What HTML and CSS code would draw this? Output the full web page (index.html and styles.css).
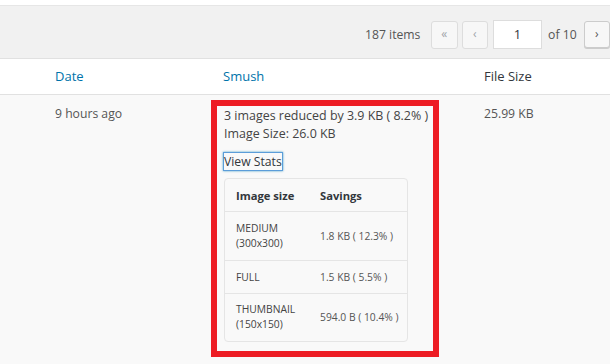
FILE: index.html
```html
<!DOCTYPE html>
<html>
<head>
<meta charset="utf-8">
<link rel="stylesheet" href="styles.css">
</head>
<body>
<div class="topstrip"></div>
<div class="toolbar">
  <span class="displaying-num">187 items</span>
  <span class="pbtn disabled first">&laquo;</span>
  <span class="pbtn disabled prev">&lsaquo;</span>
  <span class="pinput">1</span>
  <span class="total">of 10</span>
  <span class="pbtn next">&rsaquo;</span>
</div>
<div class="thead">
  <div class="th"></div>
  <div class="th sortable">Date</div>
  <div class="th sortable">Smush</div>
  <div class="th">File Size</div>
</div>
<div class="trow">
  <div class="td"></div>
  <div class="td">9 hours ago</div>
  <div class="td smush">
    <div class="line">3 images reduced by 3.9 KB ( 8.2% )</div>
    <div class="line">Image Size: 26.0 KB</div>
    <a class="view-stats" href="#">View Stats</a>
    <div class="stats">
      <div class="srow shead">
        <div class="sc">Image size</div>
        <div class="sc">Savings</div>
      </div>
      <div class="srow two">
        <div class="sc label">MEDIUM<br>(300x300)</div>
        <div class="sc">1.8 KB ( 12.3% )</div>
      </div>
      <div class="srow">
        <div class="sc label">FULL</div>
        <div class="sc">1.5 KB ( 5.5% )</div>
      </div>
      <div class="srow two last">
        <div class="sc label">THUMBNAIL<br>(150x150)</div>
        <div class="sc">594.0 B ( 10.4% )</div>
      </div>
    </div>
  </div>
  <div class="td">25.99 KB</div>
</div>
<div class="highlight"></div>
</body>
</html>
```
FILE: styles.css
```css
* { box-sizing: border-box; }
html, body { margin: 0; padding: 0; }
body {
  width: 610px;
  height: 364px;
  overflow: hidden;
  position: relative;
  background: #f9f9f9;
  font-family: "Open Sans", "Noto Sans", sans-serif;
  color: #555;
}
.topstrip {
  height: 6px;
  background: #fff;
  border-bottom: 1px solid #e6e6e6;
}
.toolbar {
  height: 53px;
  background: #f1f1f1;
  border-bottom: 1px solid #e1e1e1;
  display: flex;
  align-items: flex-start;
  padding: 14px 0 0 365px;
  white-space: nowrap;
  font-size: 12.2px;
}
.displaying-num {
  width: 54px;
  line-height: 29px;
  margin-right: 12px;
  color: #555;
}
.pbtn {
  width: 27px;
  height: 28px;
  margin-top: 1px;
  border: 1px solid #ddd;
  border-radius: 3px;
  background: #f7f7f7;
  color: #a0a5aa;
  display: flex;
  align-items: center;
  justify-content: center;
  font-size: 12px;
  line-height: 1;
  padding-bottom: 2px;
}
.pbtn.first { margin-right: 4px; }
.pbtn.prev { margin-right: 5px; }
.pbtn.next {
  border-color: #ccc;
  box-shadow: 0 1px 0 #ccc;
  color: #555;
  height: 27px;
}
.pinput {
  width: 50px;
  height: 29px;
  background: #fff;
  border: 1px solid #ddd;
  text-align: center;
  line-height: 27px;
  font-size: 13px;
  color: #32373c;
  margin-right: 6px;
}
.total {
  width: 30px;
  line-height: 29px;
  margin-right: 6px;
  color: #555;
}
.thead {
  height: 36px;
  background: #fff;
  border-bottom: 1px solid #e1e1e1;
  display: grid;
  grid-template-columns: 45px 168px 261px 1fr;
}
.th {
  padding-left: 10px;
  line-height: 35px;
  font-size: 13px;
  color: #32373c;
}
.th.sortable { color: #0073aa; }
.trow {
  display: grid;
  grid-template-columns: 45px 168px 261px 1fr;
  align-items: start;
}
.td {
  padding: 10px 0 0 10px;
  font-size: 12.2px;
  line-height: 18px;
  color: #555;
}
.td.smush { padding-top: 12px; padding-left: 11px; font-size: 12.45px; color: #444; }
.view-stats {
  display: inline-block;
  margin-top: 10px;
  line-height: 17px;
  font-size: 12.2px;
  color: #32373c;
  text-decoration: none;
  box-shadow: 0 0 0 1px #5b9dd9, 0 0 2px 1px rgba(30, 140, 190, 0.8);
}
.stats {
  width: 184px;
  margin-top: 7px;
  border: 1px solid #e5e5e5;
  border-radius: 4px;
  background: #f9f9f9;
}
.srow {
  display: grid;
  grid-template-columns: 84px 1fr;
  align-items: center;
  border-top: 1px solid #e5e5e5;
  padding: 9px 0 8px;
  line-height: 15px;
  font-size: 10.3px;
  color: #555;
}
.srow.shead {
  border-top: 0;
  padding: 9px 0 8px;
  font-size: 11.2px;
  font-weight: bold;
  color: #32373c;
}
.srow.two { padding: 9px 0 9px; }
.srow.last { padding: 8px 0 9px; }
.sc { padding-left: 11px; }
.sc.label { color: #444; }
.highlight {
  position: absolute;
  left: 211px;
  top: 100px;
  width: 228px;
  height: 257px;
  border: 6px solid #ed1c24;
}
```
